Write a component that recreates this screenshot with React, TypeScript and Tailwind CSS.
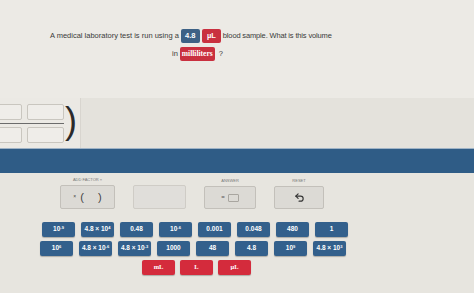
import { Undo2 } from "lucide-react"

const row1 = [
  <>10<sup className="text-[4px]">-9</sup></>,
  <>4.8 × 10<sup className="text-[4px]">4</sup></>,
  <>0.48</>,
  <>10<sup className="text-[4px]">-6</sup></>,
  <>0.001</>,
  <>0.048</>,
  <>480</>,
  <>1</>,
]

const row2 = [
  <>10<sup className="text-[4px]">6</sup></>,
  <>4.8 × 10<sup className="text-[4px]">-6</sup></>,
  <>4.8 × 10<sup className="text-[4px]">-3</sup></>,
  <>1000</>,
  <>48</>,
  <>4.8</>,
  <>10<sup className="text-[4px]">9</sup></>,
  <>4.8 × 10<sup className="text-[4px]">3</sup></>,
]

function Tile({ children, red }: { children: React.ReactNode; red?: boolean }) {
  return (
    <div
      className={
        "h-[15px] w-[33px] rounded-[2px] flex items-center justify-center text-white text-[6.5px] font-bold leading-none shadow-[0_1px_1px_rgba(0,0,0,0.25)] " +
        (red ? "bg-[#d42b3c] font-['Liberation_Serif',serif]" : "bg-[#33608c]")
      }
    >
      {children}
    </div>
  )
}

export default function App() {
  return (
    <div className="w-[474px] h-[293px] overflow-hidden flex flex-col font-['Liberation_Sans',Arial,sans-serif] text-[#3a3a3a]">
      {/* question */}
      <div className="h-[98px] bg-[#eceae5] pt-[29px]">
        <div className="flex items-center h-[14px] pl-[50px] text-[7.5px] gap-[2px]">
          <span>A medical laboratory test is run using a</span>
          <span className="h-[14px] w-[19px] rounded-[2px] bg-[#3d6185] text-white font-bold flex items-center justify-center">4.8</span>
          <span className="h-[14px] w-[19px] rounded-[2px] bg-[#c9303f] text-white font-bold flex items-center justify-center">µL</span>
          <span className="tracking-[-0.15px]">blood sample. What is this volume</span>
        </div>
        <div className="flex items-center h-[14px] pl-[172px] mt-[4px] text-[7.5px] gap-[2px]">
          <span>in</span>
          <span className="h-[14px] px-[2px] rounded-[2px] bg-[#c9303f] text-white font-bold font-['Liberation_Serif',serif] flex items-center">milliliters</span>
          <span className="ml-[2px]">?</span>
        </div>
      </div>

      {/* work area */}
      <div className="h-[50px] bg-[#e4e2dc] flex">
        <div className="w-[81px] bg-[#ebe9e4] border-r border-[#d8d5cf] flex items-center">
          <div className="flex flex-col gap-[3px] -ml-[15px]">
            <div className="flex gap-[5px]">
              <div className="w-[37px] h-[16px] border border-[#c9c6bf] rounded-[2px] bg-[#efede9]" />
              <div className="w-[37px] h-[16px] border border-[#c9c6bf] rounded-[2px] bg-[#efede9]" />
            </div>
            <div className="h-[1px] w-[79px] bg-[#6b6b6b]" />
            <div className="flex gap-[5px]">
              <div className="w-[37px] h-[16px] border border-[#c9c6bf] rounded-[2px] bg-[#efede9]" />
              <div className="w-[37px] h-[16px] border border-[#c9c6bf] rounded-[2px] bg-[#efede9]" />
            </div>
          </div>
          <span className="ml-[1px] text-[36px] leading-none text-[#2b2b2b] -mt-[4px]">)</span>
        </div>
        <div className="flex-1" />
      </div>

      {/* blue band */}
      <div className="h-[25px] bg-[#2f5c86] border-t border-[#9fb3c6]" />

      {/* factor controls */}
      <div className="flex-1 bg-[#e7e5df] pt-[5px]">
        <div className="flex items-end pl-[60px] gap-[18px]">
          <div className="flex flex-col items-center gap-[3px]">
            <span className="text-[4px] leading-none text-[#777]">ADD FACTOR ×</span>
            <div className="w-[55px] h-[24px] bg-[#dcdad5] border border-[#c3c0ba] rounded-[2px] flex items-center justify-center gap-[4px] text-[#444]">
              <span className="text-[5px]">×</span>
              <span className="text-[11px]">(</span>
              <span className="w-[6px]" />
              <span className="text-[11px]">)</span>
            </div>
          </div>
          <div className="w-[53px] h-[24px] bg-[#e0deda] border border-[#cfccc6] rounded-[2px]" />
          <div className="flex flex-col items-center gap-[3px]">
            <span className="text-[4px] leading-none text-[#777]">ANSWER</span>
            <div className="w-[52px] h-[23px] bg-[#dcdad5] border border-[#c3c0ba] rounded-[2px] flex items-center justify-center gap-[3px] text-[#555]">
              <span className="text-[6px]">=</span>
              <div className="w-[11px] h-[8px] border border-[#a9a6a0] rounded-[1px]" />
            </div>
          </div>
          <div className="flex flex-col items-center gap-[3px]">
            <span className="text-[4px] leading-none text-[#777]">RESET</span>
            <div className="w-[50px] h-[23px] bg-[#dcdad5] border border-[#c3c0ba] rounded-[2px] flex items-center justify-center">
              <Undo2 className="w-[11px] h-[11px] text-[#333]" strokeWidth={2.5} />
            </div>
          </div>
        </div>

        <div className="pl-[42px] mt-[13px] flex flex-col gap-[4px]">
          <div className="flex gap-[6px]">
            {row1.map((t, i) => (
              <Tile key={i}>{t}</Tile>
            ))}
          </div>
          <div className="flex gap-[6px] -ml-[2px]">
            {row2.map((t, i) => (
              <Tile key={i}>{t}</Tile>
            ))}
          </div>
        </div>

        <div className="pl-[142px] mt-[4px] flex gap-[5px]">
          <Tile red>mL</Tile>
          <Tile red>L</Tile>
          <Tile red>µL</Tile>
        </div>
      </div>
    </div>
  )
}
